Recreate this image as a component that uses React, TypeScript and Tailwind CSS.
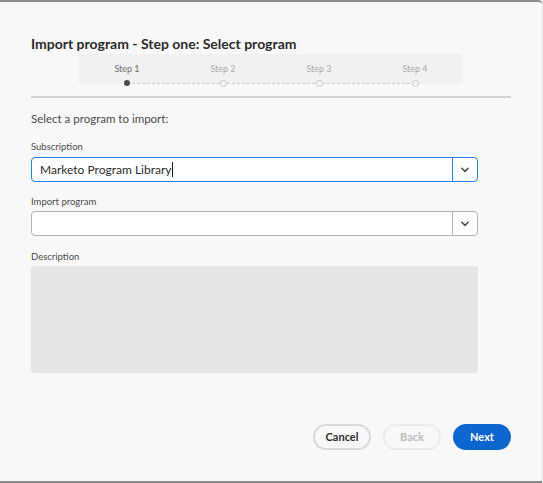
import React from 'react';

const steps = ['Step 1', 'Step 2', 'Step 3', 'Step 4'];

const Chevron: React.FC = () => (
  <svg width="10" height="6" viewBox="0 0 10 6" fill="none">
    <path d="M1.8 1.3L5 4.4L8.2 1.3" stroke="#4b4b4b" strokeWidth="1.5" strokeLinecap="round" strokeLinejoin="round" />
  </svg>
);

const Picker: React.FC<{ value?: string; focused?: boolean }> = ({ value, focused }) => (
  <div
    className={`flex h-[25px] w-[447px] rounded-[4px] border bg-white ${
      focused ? 'border-[#2680eb]' : 'border-[#b3b3b3]'
    }`}
  >
    <div className="flex flex-1 items-center pl-[8px] text-[12px] text-[#2c2c2c]">
      {value}
      {focused && <span className="ml-[1px] inline-block h-[15px] w-px bg-[#1a1a1a]" />}
    </div>
    <div
      className={`flex w-[25px] items-center justify-center border-l ${
        focused ? 'border-[#2680eb]' : 'border-[#b3b3b3]'
      }`}
    >
      <Chevron />
    </div>
  </div>
);

const App: React.FC = () => {
  return (
    <div className="flex h-[483px] w-[543px] bg-[#e8e8e8]" style={{ fontFamily: 'Lato, "Open Sans", sans-serif' }}>
      <div className="flex h-full w-[542px] flex-col rounded-tr-[4px] border-y-2 border-[#8c8c8c] bg-[#f8f8f8] px-[31px] pt-[32px]">
        {/* Title */}
        <h1 className="text-[14px] font-bold leading-[20px] text-[#2c2c2c]">
          Import program - Step one: Select program
        </h1>

        {/* Stepper */}
        <div className="ml-[48px] w-[384px]">
          <div className="grid h-[30px] grid-cols-4 items-center bg-[#f1f1f1]">
            {steps.map((s, i) => (
              <div
                key={s}
                className={`text-center text-[9px] ${i === 0 ? 'text-[#6e6e6e]' : 'text-[#ababab]'}`}
              >
                {s}
              </div>
            ))}
          </div>
          <div className="relative -mt-[5px] grid h-[8px] grid-cols-4">
            <div className="absolute left-[48px] right-[48px] top-[4px] border-t border-dashed border-[#cfcfcf]" />
            {steps.map((s, i) => (
              <div key={s} className="relative flex items-center justify-center">
                {i === 0 ? (
                  <span className="h-[6px] w-[6px] rounded-full bg-[#4b4b4b]" />
                ) : (
                  <span className="h-[7px] w-[7px] rounded-full border border-[#c8c8c8] bg-[#f8f8f8]" />
                )}
              </div>
            ))}
          </div>
        </div>

        <div className="mt-[9px] h-[2px] bg-[#d3d3d3]" />

        <p className="mt-[13px] text-[11.5px] leading-[16px] text-[#4b4b4b]">Select a program to import:</p>

        <label className="mt-[13px] text-[9.5px] leading-[14px] text-[#4b4b4b]">Subscription</label>
        <div className="mt-[3px]">
          <Picker value="Marketo Program Library" focused />
        </div>

        <label className="mt-[13px] text-[9.5px] leading-[14px] text-[#4b4b4b]">Import program</label>
        <div className="mt-[2px]">
          <Picker />
        </div>

        <label className="mt-[14px] text-[9.5px] leading-[14px] text-[#4b4b4b]">Description</label>
        <div className="mt-[2px] h-[107px] w-[447px] rounded-[3px] bg-[#e6e6e6]" />

        {/* Footer */}
        <div className="mt-[51px] flex justify-end gap-[12px]">
          <button className="h-[26px] w-[58px] rounded-full border-2 border-[#dadada] text-[11px] font-bold text-[#2c2c2c]">
            Cancel
          </button>
          <button
            disabled
            className="h-[26px] w-[58px] rounded-full border-2 border-[#ececec] text-[11px] font-bold text-[#bdbdbd]"
          >
            Back
          </button>
          <button className="h-[26px] w-[58px] rounded-full bg-[#0d66d0] text-[11px] font-bold text-white">
            Next
          </button>
        </div>
      </div>
    </div>
  );
};

export default App;
